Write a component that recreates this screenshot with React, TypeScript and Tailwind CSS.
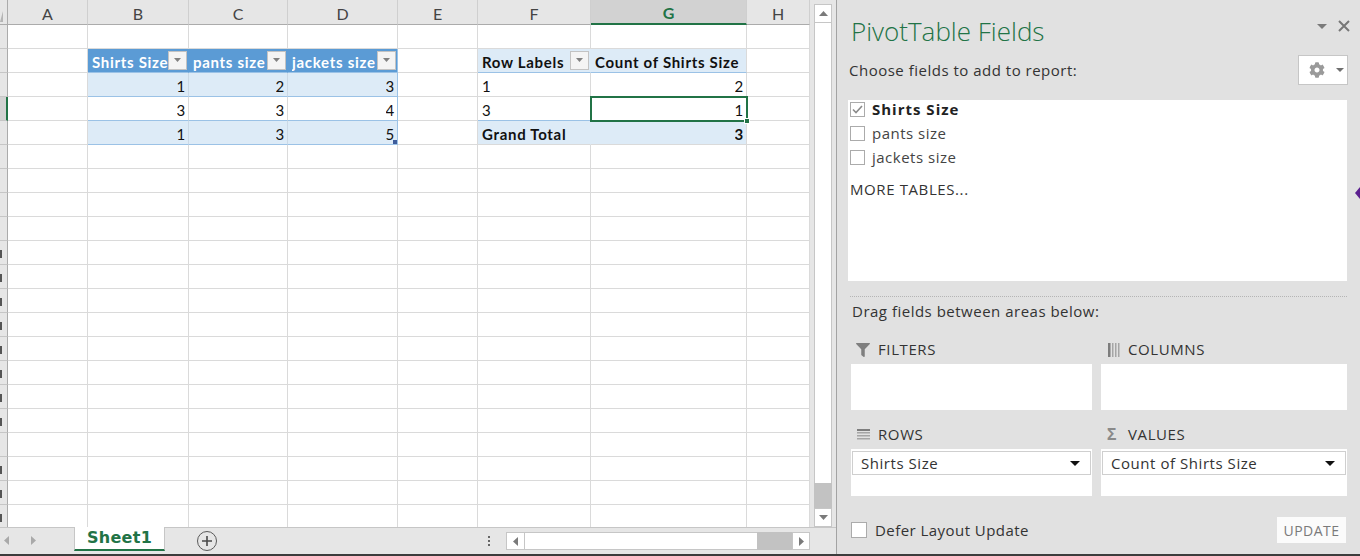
import React from 'react';
import { FaCog, FaFilter } from 'react-icons/fa';

type Col = { k: string; w: string };

const COLS: Col[] = [
  { k: 'A', w: 'w-[80px]' },
  { k: 'B', w: 'w-[101px]' },
  { k: 'C', w: 'w-[99px]' },
  { k: 'D', w: 'w-[110px]' },
  { k: 'E', w: 'w-[80px]' },
  { k: 'F', w: 'w-[113px]' },
  { k: 'G', w: 'w-[156px]' },
  { k: 'H', w: 'w-[63px]' },
];

type Cell = {
  v?: string;
  bg?: string;
  fg?: string;
  br?: string;
  bb?: string;
  bold?: boolean;
  left?: boolean;
  drop?: boolean;
  sel?: boolean;
  corner?: boolean;
};

// table: B2:D5, pivot: F2:G5
const HEAD: Cell = { bg: 'bg-[#5b9bd5]', fg: 'text-white', br: 'border-r-[#5b9bd5]', bb: 'border-b-[#9bc2e6]', bold: true, left: true, drop: true };
const BAND: Cell = { bg: 'bg-[#ddebf7]', br: 'border-r-[#cbd9e6]', bb: 'border-b-[#9bc2e6]' };
const PLAIN: Cell = { bg: 'bg-white', bb: 'border-b-[#9bc2e6]' };

const CELLS: Record<string, Cell> = {
  B2: { ...HEAD, v: 'Shirts Size' },
  C2: { ...HEAD, v: 'pants size' },
  D2: { ...HEAD, v: 'jackets size', br: 'border-r-[#9bc2e6]' },
  B3: { ...BAND, v: '1' },
  C3: { ...BAND, v: '2' },
  D3: { ...BAND, v: '3', br: 'border-r-[#9bc2e6]' },
  B4: { ...PLAIN, v: '3' },
  C4: { ...PLAIN, v: '3' },
  D4: { ...PLAIN, v: '4', br: 'border-r-[#9bc2e6]' },
  B5: { ...BAND, v: '1' },
  C5: { ...BAND, v: '3' },
  D5: { ...BAND, v: '5', br: 'border-r-[#9bc2e6]', corner: true },

  F2: { v: 'Row Labels', bg: 'bg-[#ddebf7]', br: 'border-r-[#ddebf7]', bb: 'border-b-[#9bc2e6]', bold: true, left: true, drop: true },
  G2: { v: 'Count of Shirts Size', bg: 'bg-[#ddebf7]', bb: 'border-b-[#9bc2e6]', bold: true, left: true },
  F3: { v: '1', left: true },
  G3: { v: '2' },
  F4: { v: '3', left: true, bb: 'border-b-[#9bc2e6]' },
  G4: { v: '1', sel: true, bb: 'border-b-[#9bc2e6]' },
  F5: { v: 'Grand Total', bg: 'bg-[#ddebf7]', br: 'border-r-[#ddebf7]', bold: true, left: true },
  G5: { v: '3', bg: 'bg-[#ddebf7]', bold: true },
};

const ROWS = Array.from({ length: 21 }, (_, i) => i + 1);
// rows whose (scrolled-off) row number leaves a sliver at the left edge
const MARKED = [10, 11, 12, 13, 14, 15, 16, 17, 19, 20, 21];

function DropBtn() {
  return (
    <div className="w-[19px] h-[19px] shrink-0 self-center mr-[1px] bg-[#f4f4f4] border border-[#c3c3c3] flex items-center justify-center">
      <svg width="7" height="4" viewBox="0 0 7 4">
        <path d="M0 0h7L3.5 4z" fill="#808080" />
      </svg>
    </div>
  );
}

function GridCell({ col, row }: { col: Col; row: number }) {
  const c = CELLS[col.k + row] || {};
  const align = c.drop ? 'justify-between pl-[4px]' : c.left ? 'justify-start pl-[4px]' : 'justify-end pr-[2px]';
  return (
    <div
      className={`${col.w} h-[24px] shrink-0 border-r border-b ${c.br ?? 'border-r-[#dadada]'} ${c.bb ?? 'border-b-[#dadada]'} ${c.bg ?? ''} ${c.fg ?? 'text-[#111]'} ${c.bold ? 'font-bold' : ''} ${align} relative flex items-end pb-[1px] text-[15px] leading-[18px] tracking-[0.7px] whitespace-nowrap`}
    >
      {c.v && <span className="overflow-hidden">{c.v}</span>}
      {c.drop && <DropBtn />}
      {c.corner && <div className="absolute right-0 bottom-0 w-[4px] h-[4px] bg-[#3f5d9c]" />}
      {c.sel && (
        <>
          <div className="absolute -left-[1px] -top-[1px] -right-[2px] -bottom-[2px] border-2 border-[#217346] z-10" />
          <div className="absolute -right-[4px] -bottom-[4px] w-[6px] h-[6px] bg-[#217346] border border-white z-20" />
        </>
      )}
    </div>
  );
}

function Grid() {
  return (
    <div className="w-[810px] h-full overflow-hidden flex flex-col bg-white">
      <div className="flex h-[25px] shrink-0 bg-[#e6e6e6]">
        <div className="w-[8px] h-[25px] border-r border-b border-[#ababab] overflow-hidden">
          <svg width="8" height="25" viewBox="0 0 8 25">
            <path d="M0 22h3V11z" fill="#b5b5b5" />
          </svg>
        </div>
        {COLS.map((c) => {
          const on = c.k === 'G';
          return (
            <div
              key={c.k}
              className={`${c.w} h-[25px] shrink-0 border-r border-r-[#cfcfcf] flex items-end justify-center pb-[1px] text-[16px] leading-[19px] ${
                on
                  ? 'bg-[#d2d2d2] border-b-2 border-b-[#217346] text-[#217346] font-bold'
                  : 'border-b border-b-[#ababab] text-[#444]'
              }`}
            >
              {c.k}
            </div>
          );
        })}
      </div>
      {ROWS.map((r) => (
        <div key={r} className="flex h-[24px] shrink-0">
          <div
            className={`w-[8px] h-[24px] shrink-0 border-b border-b-[#c6c6c6] ${
              r === 4 ? 'bg-[#d2d2d2] border-r-2 border-r-[#217346]' : 'bg-[#e6e6e6] border-r border-r-[#ababab]'
            }`}
          >
            {MARKED.includes(r) && <div className="mt-[9px] w-[2px] h-[8px] bg-[#555]" />}
          </div>
          {COLS.map((c) => (
            <GridCell key={c.k} col={c} row={r} />
          ))}
        </div>
      ))}
    </div>
  );
}

function VScroll() {
  return (
    <div className="w-[26px] h-full bg-[#e6e6e6] pl-[4px] pr-[4px] pt-[4px] flex flex-col">
      <div className="h-[19px] bg-white border border-[#c6c6c6] flex items-center justify-center">
        <svg width="9" height="5" viewBox="0 0 9 5">
          <path d="M0 5h9L4.5 0z" fill="#7a7a7a" />
        </svg>
      </div>
      <div className="flex-1 bg-white border-x border-[#c6c6c6]" />
      <div className="h-[25px] bg-[#c2c2c2]" />
      <div className="h-[19px] bg-white border border-[#c6c6c6] flex items-center justify-center">
        <svg width="9" height="5" viewBox="0 0 9 5">
          <path d="M0 0h9L4.5 5z" fill="#7a7a7a" />
        </svg>
      </div>
    </div>
  );
}

function TabBar() {
  return (
    <div className="h-[27px] flex items-start bg-[#e6e6e6] border-t border-[#c6c6c6]">
      <div className="w-[74px] h-full flex items-center pl-[4px] gap-[22px] pb-[1px]">
        <svg width="5" height="9" viewBox="0 0 5 9">
          <path d="M5 0v9L0 4.5z" fill="#a9a9a9" />
        </svg>
        <svg width="5" height="9" viewBox="0 0 5 9">
          <path d="M0 0v9l5-4.5z" fill="#a9a9a9" />
        </svg>
      </div>
      <div className="w-[91px] h-[24px] -mt-px bg-white border-x border-[#c6c6c6] border-b-2 border-b-[#217346] flex items-center justify-center font-['DejaVu_Sans',sans-serif] font-bold text-[16px] tracking-[0.3px] text-[#217346]">
        Sheet1
      </div>
      <div className="w-[313px] h-full pl-[32px] pt-[3px]">
        <div className="w-[20px] h-[20px] rounded-full border-[1.5px] border-[#5a5a5a] flex items-center justify-center">
          <svg width="10" height="10" viewBox="0 0 10 10">
            <path d="M5 0v10M0 5h10" stroke="#4a4a4a" strokeWidth="1.6" />
          </svg>
        </div>
      </div>
      <div className="w-[28px] h-full flex items-center pl-[10px] pb-[1px]">
        <div className="flex flex-col gap-[2px]">
          <div className="w-[2px] h-[2px] bg-[#666]" />
          <div className="w-[2px] h-[2px] bg-[#666]" />
          <div className="w-[2px] h-[2px] bg-[#666]" />
        </div>
      </div>
      <div className="w-[304px] h-[18px] mt-[4px] flex">
        <div className="w-[19px] h-full bg-white border border-[#c6c6c6] flex items-center justify-center">
          <svg width="5" height="9" viewBox="0 0 5 9">
            <path d="M5 0v9L0 4.5z" fill="#7a7a7a" />
          </svg>
        </div>
        <div className="w-[232px] h-full bg-white border-y border-[#c6c6c6]" />
        <div className="w-[35px] h-full bg-[#c2c2c2]" />
        <div className="w-[18px] h-full bg-white border border-[#c6c6c6] flex items-center justify-center">
          <svg width="5" height="9" viewBox="0 0 5 9">
            <path d="M0 0v9l5-4.5z" fill="#7a7a7a" />
          </svg>
        </div>
      </div>
    </div>
  );
}

function Check({ on, size = 'w-[15px] h-[15px]' }: { on?: boolean; size?: string }) {
  return (
    <div className={`${size} shrink-0 bg-white border border-[#ababab] flex items-center justify-center`}>
      {on && (
        <svg width="11" height="9" viewBox="0 0 11 9">
          <path d="M1 4.5l3 3L10 1" fill="none" stroke="#8a8a8a" strokeWidth="1.6" />
        </svg>
      )}
    </div>
  );
}

function AreaLabel({ icon, text, pl }: { icon: React.ReactNode; text: string; pl: string }) {
  return (
    <div className={`h-[17px] flex items-center gap-[8px] ${pl} text-[15px] leading-[17px] tracking-[0.6px] text-[#333]`}>
      {icon}
      <span>{text}</span>
    </div>
  );
}

function FieldItem({ text }: { text: string }) {
  return (
    <div className="h-[24px] bg-white border border-[#cfcfcf] flex items-center justify-between pl-[8px] pr-[10px] text-[15px] tracking-[0.55px] text-[#333]">
      <span>{text}</span>
      <svg width="10" height="5" viewBox="0 0 10 5">
        <path d="M0 0h10L5 5z" fill="#111" />
      </svg>
    </div>
  );
}

function Panel() {
  return (
    <div className="w-[524px] h-full border-l border-[#a3a3a3] bg-[#e1e1e1] relative font-['Open_Sans',sans-serif] text-[#333]">
      <div className="h-[49px] flex items-start justify-between">
        <div className="pl-[14px] pt-[14px] text-[26px] leading-[34px] font-light text-[#217346]">PivotTable Fields</div>
        <div className="flex items-center gap-[11px] pt-[20px] pr-[10px]">
          <svg width="10" height="5" viewBox="0 0 10 5">
            <path d="M0 0h10L5 5z" fill="#7a7a7a" />
          </svg>
          <svg width="12" height="12" viewBox="0 0 12 12">
            <path d="M1 1l10 10M11 1L1 11" stroke="#777" strokeWidth="2" />
          </svg>
        </div>
      </div>

      <div className="mt-[6px] h-[30px] flex items-center justify-between pl-[12px] pr-[12px]">
        <span className="text-[15px] tracking-[0.5px]">Choose fields to add to report:</span>
        <div className="w-[50px] h-[30px] bg-white border border-[#c6c6c6] flex items-center pl-[10px] gap-[11px]">
          <FaCog size={16} color="#9a9a9a" />
          <svg width="8" height="4" viewBox="0 0 8 4">
            <path d="M0 0h8L4 4z" fill="#6f6f6f" />
          </svg>
        </div>
      </div>

      <div className="mt-[15px] ml-[11px] w-[499px] h-[181px] bg-white pl-[2px] flex flex-col">
        <div className="flex flex-col gap-[6px]">
          <div className="h-[18px] flex items-center gap-[7px]">
            <Check on />
            <span className="text-[15px] font-bold tracking-[1px] text-[#222]">Shirts Size</span>
          </div>
          <div className="h-[18px] flex items-center gap-[7px]">
            <Check />
            <span className="text-[15px] tracking-[0.5px] text-[#444]">pants size</span>
          </div>
          <div className="h-[18px] flex items-center gap-[7px]">
            <Check />
            <span className="text-[15px] tracking-[0.5px] text-[#444]">jackets size</span>
          </div>
        </div>
        <div className="mt-[15px] h-[16px] text-[15px] leading-[16px] tracking-[0.6px] text-[#333]">MORE TABLES...</div>
      </div>

      <div className="mt-[15px] mx-[13px] border-t border-dotted border-[#b5b5b5]" />

      <div className="mt-[6px] h-[17px] pl-[15px] text-[15px] leading-[17px] tracking-[0.5px]">Drag fields between areas below:</div>

      <div className="mt-[21px] ml-[14px] flex gap-[9px]">
        <div className="w-[241px] flex flex-col">
          <AreaLabel pl="pl-[5px]" text="FILTERS" icon={<FaFilter size={14} color="#7f7f7f" />} />
          <div className="mt-[6px] h-[46px] bg-white" />
          <div className="mt-[16px]">
            <AreaLabel
              pl="pl-[6px]"
              text="ROWS"
              icon={
                <svg width="13" height="11" viewBox="0 0 13 11">
                  <rect x="0" y="0" width="13" height="2" fill="#7d7d7d" />
                  <rect x="0" y="3" width="13" height="1.5" fill="#a5a5a5" />
                  <rect x="0" y="6" width="13" height="1.5" fill="#a5a5a5" />
                  <rect x="0" y="9" width="13" height="1.5" fill="#a5a5a5" />
                </svg>
              }
            />
          </div>
          <div className="mt-[6px] h-[47px] bg-white pt-[2px] px-[1px]">
            <FieldItem text="Shirts Size" />
          </div>
        </div>
        <div className="w-[246px] flex flex-col">
          <AreaLabel
            pl="pl-[7px]"
            text="COLUMNS"
            icon={
              <svg width="12" height="14" viewBox="0 0 12 14">
                <rect x="0" y="0" width="2.5" height="14" fill="#7d7d7d" />
                <rect x="4" y="0" width="1.5" height="14" fill="#a5a5a5" />
                <rect x="7" y="0" width="1.5" height="14" fill="#a5a5a5" />
                <rect x="10" y="0" width="1.5" height="14" fill="#a5a5a5" />
              </svg>
            }
          />
          <div className="mt-[6px] h-[46px] bg-white" />
          <div className="mt-[16px]">
            <AreaLabel
              pl="pl-[6px]"
              text="VALUES"
              icon={<span className="w-[13px] text-[16px] font-bold leading-[17px] text-[#8a8a8a]">Σ</span>}
            />
          </div>
          <div className="mt-[6px] h-[47px] bg-white pt-[2px] px-[1px]">
            <FieldItem text="Count of Shirts Size" />
          </div>
        </div>
      </div>

      <div className="mt-[21px] h-[26px] flex items-center justify-between pl-[14px] pr-[14px]">
        <div className="flex items-center gap-[8px]">
          <Check size="w-[16px] h-[16px]" />
          <span className="text-[15px] tracking-[0.45px] text-[#333]">Defer Layout Update</span>
        </div>
        <div className="w-[69px] h-[26px] bg-[#fbfbfb] flex items-center justify-center text-[14px] tracking-[0.5px] text-[#7a7a7a]">UPDATE</div>
      </div>

      <svg className="absolute right-0 top-[187px]" width="5" height="12" viewBox="0 0 5 12">
        <path d="M5 0v12L0 6z" fill="#5b1f8f" />
      </svg>
    </div>
  );
}

export default function App() {
  return (
    <div className="w-[1360px] h-[556px] overflow-hidden bg-white flex flex-col font-['Lato',sans-serif]">
      <div className="flex h-[554px]">
        <div className="w-[836px] h-full flex flex-col">
          <div className="flex h-[527px]">
            <Grid />
            <VScroll />
          </div>
          <TabBar />
        </div>
        <Panel />
      </div>
      <div className="h-[2px] bg-[#3c3c3c]" />
    </div>
  );
}
